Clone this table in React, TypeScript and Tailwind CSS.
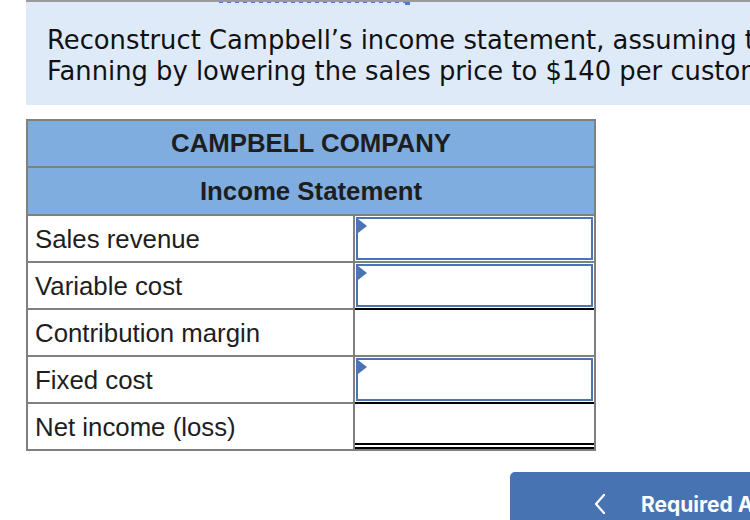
import React from "react";

const Tri = () => (
  <svg className="absolute left-0 top-0" width="10" height="15" viewBox="0 0 10 15">
    <polygon points="0,0 9,7 0,14" fill="#4a74b4" />
  </svg>
);

function InputCell() {
  return (
    <div className="flex-1 p-[1px] flex">
      <div className="relative flex-1 border-2 border-[#4a74b4] bg-white">
        <Tri />
      </div>
    </div>
  );
}

type Row = { label: string; kind: "input" | "plain" | "net"; topBlack?: boolean };

const rows: Row[] = [
  { label: "Sales revenue", kind: "input" },
  { label: "Variable cost", kind: "input" },
  { label: "Contribution margin", kind: "plain", topBlack: true },
  { label: "Fixed cost", kind: "input" },
  { label: "Net income (loss)", kind: "net", topBlack: true },
];

export default function App() {
  return (
    <div className="relative w-[750px] h-[520px] overflow-hidden bg-white">
      {/* prompt box */}
      <div className="relative ml-[26px] h-[105px] border-t-2 border-[#9a9a9a] bg-[#dfeaf8] overflow-hidden">
        <svg className="absolute left-[193px] -top-[2px]" width="192" height="5" viewBox="0 0 192 5">
          <line x1="0" y1="2" x2="186" y2="2" stroke="#4a7cc1" strokeWidth="2" strokeDasharray="4 4" />
          <rect x="186" y="0" width="5" height="5" fill="#4a7cc1" />
        </svg>
        <div
          className="pl-[21px] pt-[23px] text-[25.8px] leading-[31px] text-[#111] whitespace-nowrap"
          style={{ fontFamily: '"DejaVu Sans", Verdana, sans-serif' }}
        >
          <div>Reconstruct Campbell’s income statement, assuming the</div>
          <div>Fanning by lowering the sales price to $140 per customer</div>
        </div>
      </div>

      {/* table */}
      <div
        className="ml-[26px] mt-[14px] w-[570px] border-2 border-[#808080] text-[#1e1e1e]"
        style={{ fontFamily: '"Liberation Sans", Arial, sans-serif' }}
      >
        <div className="h-[47px] bg-[#80ade0] border-b-2 border-[#808080] flex items-center justify-center font-bold text-[25.8px]">
          CAMPBELL COMPANY
        </div>
        <div className="h-[46px] bg-[#80ade0] flex items-center justify-center font-bold text-[25.8px]">
          Income Statement
        </div>
        {rows.map((r) => (
          <div key={r.label} className="flex h-[47px] border-t-2 border-[#808080]">
            <div className="w-[327px] border-r-2 border-[#808080] flex items-center pl-[7px] pt-[1px] text-[25.8px]">
              {r.label}
            </div>
            <div className={"flex-1 flex flex-col " + (r.topBlack ? "border-t-2 border-black -mt-[2px]" : "")}>
              {r.kind === "input" ? (
                <InputCell />
              ) : r.kind === "net" ? (
                <div className="flex-1 flex flex-col justify-end">
                  <div className="h-[2px] bg-black" />
                  <div className="h-[2px]" />
                  <div className="h-[2px] bg-black" />
                </div>
              ) : (
                <div className="flex-1" />
              )}
            </div>
          </div>
        ))}
      </div>

      {/* button */}
      <div
        className="ml-[510px] mt-[21px] h-[60px] w-[260px] rounded-tl-[5px] bg-[#4873b3] flex items-start pt-[20px] text-white"
        style={{ fontFamily: 'Inter, "Liberation Sans", sans-serif' }}
      >
        <svg className="ml-[83px] mt-[1px]" width="14" height="22" viewBox="0 0 14 22">
          <polyline points="11,2 3,11 11,20" fill="none" stroke="white" strokeWidth="2.2" strokeLinecap="round" strokeLinejoin="round" />
        </svg>
        <span className="ml-[34px] text-[21px] font-bold leading-[26px] whitespace-nowrap">Required A</span>
      </div>
    </div>
  );
}
